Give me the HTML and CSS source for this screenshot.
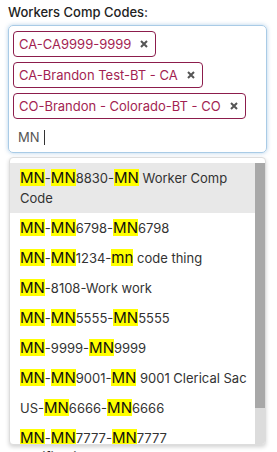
FILE: index.html
```html
<!DOCTYPE html>
<html lang="en">
  <head>
    <meta charset="UTF-8" />
    <title>Workers Comp Codes</title>
    <link rel="stylesheet" href="styles.css">
  </head>
  <body>
    <div class="field">
      <label class="field-label">Workers Comp Codes:</label>
      <div class="picker">
        <div class="chips">
          <span class="chip">CA-CA9999-9999<svg class="chip-x" viewBox="0 0 8 8"><path d="M1 1L7 7M7 1L1 7"/></svg></span>
          <span class="chip">CA-Brandon Test-BT - CA<svg class="chip-x" viewBox="0 0 8 8"><path d="M1 1L7 7M7 1L1 7"/></svg></span>
          <span class="chip">CO-Brandon - Colorado-BT - CO<svg class="chip-x" viewBox="0 0 8 8"><path d="M1 1L7 7M7 1L1 7"/></svg></span>
          <span class="search">MN<span class="caret"></span></span>
        </div>
        <div class="dropdown">
          <ul class="options">
            <li class="active"><mark>MN</mark>-<mark>MN</mark>8830-<mark>MN</mark> Worker Comp Code</li>
            <li><mark>MN</mark>-<mark>MN</mark>6798-<mark>MN</mark>6798</li>
            <li><mark>MN</mark>-<mark>MN</mark>1234-<mark>mn</mark> code thing</li>
            <li><mark>MN</mark>-8108-Work work</li>
            <li><mark>MN</mark>-<mark>MN</mark>5555-<mark>MN</mark>5555</li>
            <li><mark>MN</mark>-9999-<mark>MN</mark>9999</li>
            <li><mark>MN</mark>-<mark>MN</mark>9001-<mark>MN</mark> 9001 Clerical Sac</li>
            <li>US-<mark>MN</mark>6666-<mark>MN</mark>6666</li>
            <li><mark>MN</mark>-<mark>MN</mark>7777-<mark>MN</mark>7777</li>
          </ul>
          <div class="scrollbar"><div class="thumb"></div></div>
        </div>
      </div>
    </div>
    <div class="field next">
      <label class="field-label">Classification Codes:</label>
    </div>
  </body>
</html>
```
FILE: styles.css
```css
body {
  margin: 0;
  padding: 4px 10px 0 8px;
  box-sizing: border-box;
  height: 452px;
  overflow: hidden;
  font-family: Inter, "DejaVu Sans", sans-serif;
  color: #222;
  background: #fff;
}

.field-label {
  display: block;
  font-size: 13px;
  font-weight: 500;
  line-height: 16px;
  margin-bottom: 5px;
}

.picker {
  position: relative;
}

.chips {
  display: flex;
  flex-direction: column;
  align-items: flex-start;
  gap: 5px;
  padding: 5px 4px 2px;
  border: 1px solid #a9cbe6;
  border-radius: 5px;
  box-shadow: 0 0 4px rgba(90, 150, 205, 0.45);
}

.chip {
  display: flex;
  align-items: center;
  gap: 9px;
  height: 24px;
  padding: 0 7px 0 5px;
  border: 1px solid #8c1d4c;
  border-radius: 4px;
  color: #a31f52;
  font-size: 13px;
}

.chip-x {
  width: 8px;
  height: 8px;
  stroke: #555;
  stroke-width: 2;
  fill: none;
}

.search {
  display: flex;
  align-items: center;
  height: 26px;
  padding-left: 5px;
  color: #555;
  font-size: 13px;
}

.caret {
  width: 1px;
  height: 15px;
  margin-left: 4px;
  background: #333;
}

.dropdown {
  position: absolute;
  top: 100%;
  left: 1px;
  right: 1px;
  height: 281px;
  margin-top: 4px;
  padding-top: 5px;
  display: flex;
  overflow: hidden;
  background: #fff;
  border: 1px solid #ddd;
  border-radius: 4px;
  box-shadow: 0 2px 4px rgba(0, 0, 0, 0.18);
}

.options {
  flex: 1;
  margin: 0;
  padding: 0;
  list-style: none;
  font-size: 13px;
  color: #333;
}

.options li {
  padding: 5px 3px 5px 10px;
  line-height: 20px;
}

.options li.active {
  background: #e8e8e8;
}

mark {
  background: #ffff00;
  color: #111;
  font-size: 15px;
  line-height: 17px;
  display: inline-block;
}

.scrollbar {
  width: 10px;
  background: #dcdcdc;
}

.thumb {
  height: 245px;
  background: #a8a8a8;
}

.next {
  margin-top: 296px;
}
```
